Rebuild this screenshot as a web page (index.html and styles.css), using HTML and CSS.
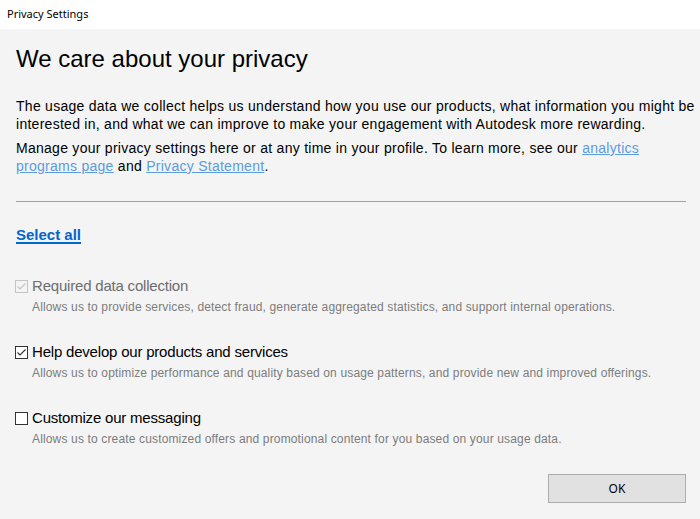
FILE: index.html
```html
<!DOCTYPE html>
<html lang="en">
<head>
    <meta charset="UTF-8">
    <meta name="viewport" content="width=device-width, initial-scale=1.0">
    <title>Privacy Settings</title>
    <link rel="stylesheet" href="styles.css">
</head>
<body>
    <!-- Window title -->
    <div class="titlebar">Privacy Settings</div>

    <div class="content">
        <h1 class="heading">We care about your privacy</h1>

        <p class="intro">The usage data we collect helps us understand how you use our products, what information you might be interested in, and what we can improve to make your engagement with Autodesk more rewarding.</p>
        <p class="intro intro-second">Manage your privacy settings here or at any time in your profile. To learn more, see our <a href="#" class="soft-link">analytics programs page</a> and <a href="#" class="soft-link">Privacy Statement</a>.</p>

        <hr class="divider">

        <a href="#" class="select-all">Select all</a>

        <!-- Options -->
        <div class="options">
            <div class="option disabled">
                <div class="option-row">
                    <svg class="checkbox" width="13" height="13" viewBox="0 0 13 13">
                        <rect x="0.5" y="0.5" width="12" height="12" fill="#f4f4f4" stroke="#c4c4c4"/>
                        <path d="M2.5 6.5 L5 9 L10.5 3.5" fill="none" stroke="#c4c4c4" stroke-width="1.2"/>
                    </svg>
                    <span class="option-label">Required data collection</span>
                </div>
                <div class="option-desc">Allows us to provide services, detect fraud, generate aggregated statistics, and support internal operations.</div>
            </div>

            <div class="option">
                <div class="option-row">
                    <svg class="checkbox" width="13" height="13" viewBox="0 0 13 13">
                        <rect x="0.5" y="0.5" width="12" height="12" fill="#ffffff" stroke="#333333"/>
                        <path d="M2.5 6.5 L5 9 L10.5 3.5" fill="none" stroke="#333333" stroke-width="1.2"/>
                    </svg>
                    <span class="option-label">Help develop our products and services</span>
                </div>
                <div class="option-desc">Allows us to optimize performance and quality based on usage patterns, and provide new and improved offerings.</div>
            </div>

            <div class="option">
                <div class="option-row">
                    <svg class="checkbox" width="13" height="13" viewBox="0 0 13 13">
                        <rect x="0.5" y="0.5" width="12" height="12" fill="#ffffff" stroke="#333333"/>
                    </svg>
                    <span class="option-label">Customize our messaging</span>
                </div>
                <div class="option-desc">Allows us to create customized offers and promotional content for you based on your usage data.</div>
            </div>
        </div>

        <div class="footer">
            <button class="ok-button">OK</button>
        </div>
    </div>
</body>
</html>
```

FILE: styles.css
```css
body {
    margin: 0;
    font-family: "Liberation Sans", Arial, sans-serif;
    background-color: #f4f4f4;
    color: #000000;
}
.titlebar {
    height: 29px;
    padding-left: 7px;
    background-color: #ffffff;
    font-family: "Noto Sans", "Segoe UI", sans-serif;
    font-size: 11px;
    line-height: 27px;
    color: #000000;
}
.content {
    display: flex;
    flex-direction: column;
    align-items: flex-start;
    padding: 0 4px 0 16px;
}
.heading {
    margin: 16px 0 0 0;
    font-size: 24px;
    line-height: 28px;
    font-weight: normal;
}
.intro {
    margin: 24px 0 0 0;
    font-size: 14px;
    line-height: 18px;
    letter-spacing: 0.27px;
}
.intro-second {
    margin-top: 6px;
}
.soft-link {
    color: #5b9bde;
}
.divider {
    align-self: stretch;
    margin: 26px 10px 0 0;
    border: none;
    border-top: 1px solid #a0a0a0;
    height: 0;
}
.select-all {
    margin-top: 24px;
    font-size: 15px;
    line-height: 18px;
    font-weight: bold;
    color: #0066cc;
    text-decoration-thickness: 2px;
    text-underline-offset: 2px;
}
.options {
    display: flex;
    flex-direction: column;
    gap: 27px;
    margin-top: 32px;
}
.option {
    display: flex;
    flex-direction: column;
    gap: 3px;
}
.option-row {
    display: flex;
    align-items: center;
    gap: 4px;
    margin-left: -1px;
}
.checkbox {
    flex-shrink: 0;
}
.option-label {
    font-size: 15px;
    line-height: 20px;
    letter-spacing: -0.2px;
}
.option-desc {
    padding-left: 16px;
    font-size: 12px;
    line-height: 16px;
    letter-spacing: 0.15px;
    color: #7c7c7c;
}
.disabled .option-label {
    color: #6d6d6d;
}
.footer {
    align-self: stretch;
    display: flex;
    justify-content: flex-end;
    margin: 27px 10px 0 0;
}
.ok-button {
    width: 138px;
    height: 29px;
    border: 1px solid #adadad;
    background-color: #e1e1e1;
    font-family: "Noto Sans", "Segoe UI", sans-serif;
    font-size: 12px;
    color: #000000;
}
```
